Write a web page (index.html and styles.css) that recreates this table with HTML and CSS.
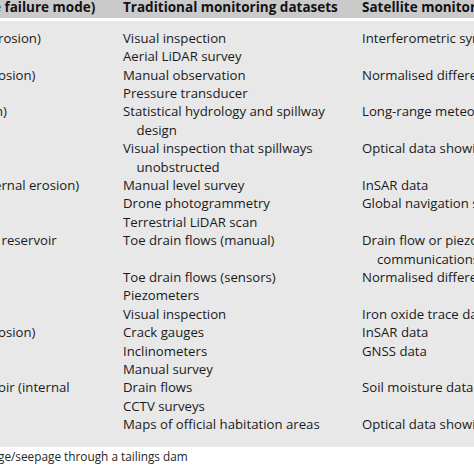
FILE: index.html
```html
<!DOCTYPE html>
<html lang="en">
<head>
<meta charset="utf-8">
<title>Monitoring datasets</title>
<link rel="stylesheet" href="styles.css">
</head>
<body>
<div class="page">
  <div class="grid head">
    <div class="c1"><span class="frag s5">e failure mode)</span></div>
    <div class="c2">Traditional monitoring datasets</div>
    <div class="c3">Satellite monitoring datasets</div>
  </div>
  <div class="grid body">
    <div class="c1"><span class="frag">rosion)</span></div>
    <div class="c2">Visual inspection</div>
    <div class="c3">Interferometric synthetic aperture radar (InSAR)</div>

    <div class="c1"></div>
    <div class="c2">Aerial LiDAR survey</div>
    <div class="c3"></div>

    <div class="c1"><span class="frag">osion)</span></div>
    <div class="c2">Manual observation</div>
    <div class="c3">Normalised difference vegetation index</div>

    <div class="c1"></div>
    <div class="c2">Pressure transducer</div>
    <div class="c3"></div>

    <div class="c1"><span class="frag s3">n)</span></div>
    <div class="c2">Statistical hydrology and spillway design</div>
    <div class="c3">Long-range meteorological forecasts</div>

    <div class="c1"></div>
    <div class="c2">Visual inspection that spillways unobstructed</div>
    <div class="c3">Optical data showing spillways</div>

    <div class="c1"><span class="frag s4">ernal erosion)</span></div>
    <div class="c2">Manual level survey</div>
    <div class="c3">InSAR data</div>

    <div class="c1"></div>
    <div class="c2">Drone photogrammetry</div>
    <div class="c3">Global navigation satellite system</div>

    <div class="c1"></div>
    <div class="c2">Terrestrial LiDAR scan</div>
    <div class="c3"></div>

    <div class="c1"><span class="frag s8">n reservoir</span></div>
    <div class="c2">Toe drain flows (manual)</div>
    <div class="c3">Drain flow or piezometer data via satellite<br>communications</div>

    <div class="c1"></div>
    <div class="c2">Toe drain flows (sensors)</div>
    <div class="c3">Normalised difference water index</div>

    <div class="c1"></div>
    <div class="c2">Piezometers</div>
    <div class="c3"></div>

    <div class="c1"></div>
    <div class="c2">Visual inspection</div>
    <div class="c3">Iron oxide trace data</div>

    <div class="c1"><span class="frag">osion)</span></div>
    <div class="c2">Crack gauges</div>
    <div class="c3">InSAR data</div>

    <div class="c1"></div>
    <div class="c2">Inclinometers</div>
    <div class="c3">GNSS data</div>

    <div class="c1"></div>
    <div class="c2">Manual survey</div>
    <div class="c3"></div>

    <div class="c1"><span class="frag">oir (internal</span></div>
    <div class="c2">Drain flows</div>
    <div class="c3">Soil moisture data</div>

    <div class="c1"></div>
    <div class="c2">CCTV surveys</div>
    <div class="c3"></div>

    <div class="c1"></div>
    <div class="c2">Maps of official habitation areas</div>
    <div class="c3">Optical data showing settlements</div>
  </div>
  <p class="caption">ge/seepage through a tailings dam</p>
</div>
</body>
</html>
```

FILE: styles.css
```css
html, body {
  margin: 0;
  padding: 0;
  width: 474px;
  height: 474px;
  overflow: hidden;
  background: #ffffff;
}

body {
  font-family: "Open Sans", "Noto Sans", "DejaVu Sans", sans-serif;
  font-size: 13.2px;
  line-height: 18.4px;
  color: #1a1a1a;
}

.page {
  margin-top: -2.3px;
  margin-left: -2px;
  width: 476px;
}

.grid {
  display: grid;
  grid-template-columns: 125px 239px max-content;
}

.head {
  background: #cacaca;
  font-weight: 700;
  font-size: 13.5px;
  color: #121212;
  padding-bottom: 2.2px;
  border-bottom: 3px solid #ffffff;
  white-space: nowrap;
}

.body {
  background: #e8e8e8;
  padding: 7.4px 0 13.3px;
}

.c1 {
  white-space: nowrap;
}

.frag {
  display: inline-block;
}

.s3 { margin-left: -3px; }
.s4 { margin-left: -4px; }
.s5 { margin-left: -5px; }
.s8 { margin-left: -8px; }

.body .c2 {
  padding-left: 13.5px;
  text-indent: -13.5px;
  padding-right: 16px;
}

.body .c3 {
  white-space: nowrap;
  padding-left: 15px;
  text-indent: -15px;
}

.caption {
  margin: 0;
  font-size: 11.8px;
  line-height: 18.4px;
  color: #262626;
}
```
